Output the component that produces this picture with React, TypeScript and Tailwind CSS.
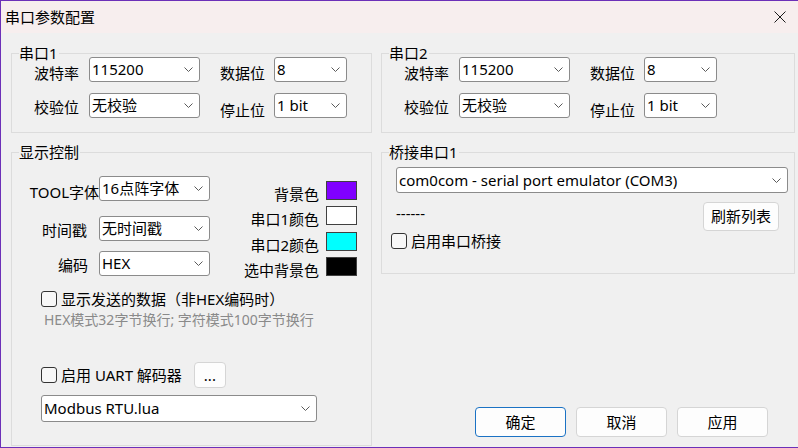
import React from "react";

const F = "font-['Noto_Sans','Noto_Sans_CJK_SC',sans-serif]";

function Chevron() {
  return (
    <svg width="9" height="5" viewBox="0 0 9 5" className="shrink-0">
      <path d="M0.5 0.5L4.5 4.5L8.5 0.5" fill="none" stroke="#5a5a5a" strokeWidth="1" />
    </svg>
  );
}

function Combo({ value, className }: { value: string; className: string }) {
  return (
    <div
      className={`flex items-center justify-between bg-white border border-[#8b8b8b] rounded-[3px] pl-[2px] pr-[6px] text-[15px] leading-none text-black shrink-0 ${className}`}
    >
      <span className="whitespace-nowrap">{value}</span>
      <Chevron />
    </div>
  );
}

function Group({
  title,
  className,
  children,
}: {
  title: string;
  className: string;
  children?: React.ReactNode;
}) {
  return (
    <div className={`relative border border-[#dcdcdc] ${className}`}>
      <span className="absolute left-[7px] -top-[11px] bg-[#f0f0f0] text-[15px] leading-[20px] pr-[1px] whitespace-nowrap">
        {title}
      </span>
      {children}
    </div>
  );
}

function Check({ label }: { label: string }) {
  return (
    <div className="flex items-center">
      <span className="w-[16px] h-[16px] rounded-[3px] border border-[#333333] bg-[#f7f7f7] shrink-0" />
      <span className="ml-[4px] text-[15px] leading-[20px] whitespace-nowrap">{label}</span>
    </div>
  );
}

function SerialGroup({ title }: { title: string }) {
  return (
    <div className="pl-[22px] pt-[3px] flex flex-col gap-[10px]">
      <div className="flex items-start">
        <span className="w-[46px] text-[15px] leading-[20px] pt-[6px] whitespace-nowrap">波特率</span>
        <Combo value="115200" className="ml-[9px] w-[111px] h-[25px]" />
        <span className="ml-[20px] w-[46px] text-[15px] leading-[20px] pt-[6px] whitespace-nowrap">数据位</span>
        <Combo value="8" className="ml-[8px] w-[73px] h-[25px]" />
      </div>
      <div className="flex items-start">
        <span className="w-[46px] text-[15px] leading-[20px] pt-[4px] whitespace-nowrap">校验位</span>
        <Combo value="无校验" className="ml-[9px] w-[111px] h-[25px]" />
        <span className="ml-[20px] w-[46px] text-[15px] leading-[20px] pt-[7px] whitespace-nowrap">停止位</span>
        <Combo value="1 bit" className="ml-[8px] w-[73px] h-[25px]" />
      </div>
      <span className="hidden">{title}</span>
    </div>
  );
}

function Swatch({ label, color, className }: { label: string; color: string; className: string }) {
  return (
    <div className={`flex items-start h-[19px] ${className}`}>
      <span className="mt-[3px] mr-[7px] text-[15px] leading-[20px] whitespace-nowrap">{label}</span>
      <span className={`w-[31px] h-[19px] border border-[#404040] ${color}`} />
    </div>
  );
}

function Btn({ label, className }: { label: string; className: string }) {
  return (
    <div
      className={`flex items-center justify-center bg-[#fdfdfd] border rounded-[4px] text-[15px] leading-none shrink-0 ${className}`}
    >
      {label}
    </div>
  );
}

export default function App() {
  return (
    <div
      className={`${F} w-[798px] h-[448px] flex flex-col border-l border-t border-b border-[#6c30b8] bg-[#f0f0f0] text-black overflow-hidden`}
    >
      {/* title bar */}
      <div className="h-[32px] shrink-0 flex items-center justify-between bg-[#f7eeee] pl-[4px] pr-[12px]">
        <span className="text-[15px] leading-none">串口参数配置</span>
        <svg width="12" height="12" viewBox="0 0 12 12">
          <path d="M0.5 0.5L11.5 11.5M11.5 0.5L0.5 11.5" stroke="#1a1a1a" strokeWidth="1" fill="none" />
        </svg>
      </div>

      {/* body */}
      <div className="flex-1 flex flex-col pl-[10px] pt-[20px] pb-[1px]">
        <div className="flex gap-[9px]">
          <Group title="串口1" className="w-[361px] h-[80px]">
            <SerialGroup title="1" />
          </Group>
          <Group title="串口2" className="w-[414px] h-[80px]">
            <SerialGroup title="2" />
          </Group>
        </div>

        <div className="flex gap-[9px] mt-[19px] flex-1">
          {/* 显示控制 */}
          <Group title="显示控制" className="w-[361px] flex flex-col">
            <div className="flex pt-[23px]">
              <div className="flex flex-col w-[198px]">
                <div className="flex items-start">
                  <span className="w-[87px] text-right text-[15px] leading-[20px] pt-[6px] whitespace-nowrap">TOOL字体</span>
                  <Combo value="16点阵字体" className="w-[111px] h-[25px]" />
                </div>
                <div className="flex items-start mt-[14px]">
                  <span className="w-[87px] pr-[12px] text-right text-[15px] leading-[20px] pt-[4px] whitespace-nowrap">时间戳</span>
                  <Combo value="无时间戳" className="w-[111px] h-[25px]" />
                </div>
                <div className="flex items-start mt-[10px]">
                  <span className="w-[87px] pr-[11px] text-right text-[15px] leading-[20px] pt-[4px] whitespace-nowrap">编码</span>
                  <Combo value="HEX" className="w-[111px] h-[25px]" />
                </div>
              </div>
              <div className="flex-1 flex flex-col items-end pr-[14px] pt-[5px]">
                <Swatch label="背景色" color="bg-[#8000ff]" className="" />
                <Swatch label="串口1颜色" color="bg-white" className="mt-[6px]" />
                <Swatch label="串口2颜色" color="bg-[#00ffff]" className="mt-[7px]" />
                <Swatch label="选中背景色" color="bg-black" className="mt-[6px]" />
              </div>
            </div>
            <div className="pl-[29px] mt-[13px]">
              <Check label="显示发送的数据（非HEX编码时）" />
            </div>
            <div className="pl-[32px] mt-[1px] text-[14px] leading-[20px] text-[#8a8a8a] whitespace-nowrap">
              HEX模式32字节换行; 字符模式100字节换行
            </div>
            <div className="pl-[29px] mt-[32px] flex items-center">
              <Check label="启用 UART 解码器" />
              <Btn label="..." className="ml-[12px] w-[32px] h-[26px] border-[#d5d5d5]" />
            </div>
            <div className="pl-[29px] mt-[7px]">
              <Combo value="Modbus RTU.lua" className="w-[276px] h-[27px]" />
            </div>
          </Group>

          {/* right column */}
          <div className="w-[414px] flex flex-col">
            <Group title="桥接串口1" className="h-[122px] flex flex-col pl-[9px] pr-[6px] pt-[14px]">
              <Combo value="com0com - serial port emulator (COM3)" className="ml-[5px] h-[26px]" />
              <div className="flex justify-between items-start mt-[9px]">
                <span className="ml-[5px] mt-[1px] text-[15px] leading-[20px]">------</span>
                <Btn label="刷新列表" className="mr-[9px] w-[76px] h-[29px] border-[#d5d5d5]" />
              </div>
              <Check label="启用串口桥接" />
            </Group>
            <div className="flex-1" />
            <div className="flex justify-end gap-[10px] pr-[27px] mb-[9px]">
              <Btn label="确定" className="w-[91px] h-[30px] border-[#1b72c4]" />
              <Btn label="取消" className="w-[91px] h-[30px] border-[#d5d5d5]" />
              <Btn label="应用" className="w-[91px] h-[30px] border-[#d5d5d5]" />
            </div>
          </div>
        </div>
      </div>
    </div>
  );
}
